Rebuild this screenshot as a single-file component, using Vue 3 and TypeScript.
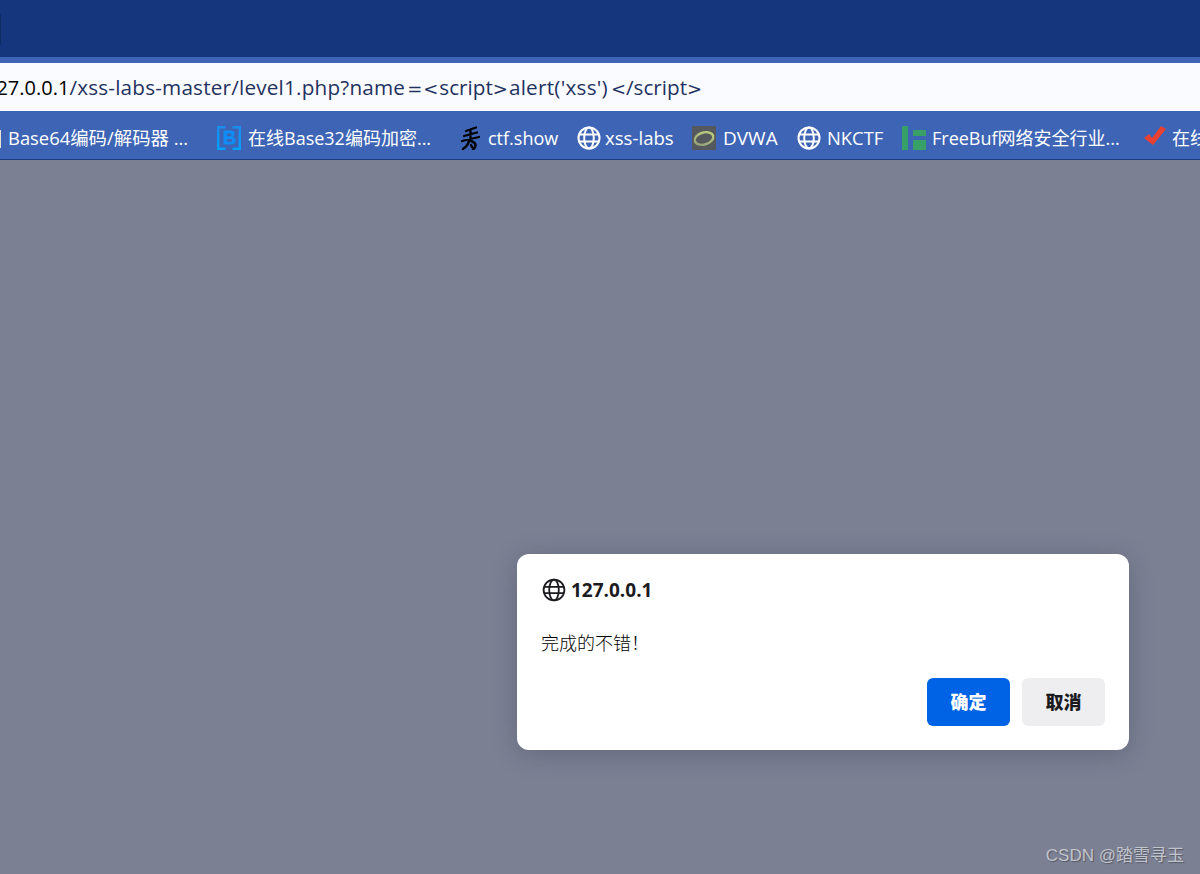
<script setup lang="ts">
interface Mark { label: string; icon: string; width: number; gap: number; size: number }
const marks: Mark[] = [
  { label: 'Base64编码/解码器 ...', icon: 'doc', width: 240, gap: 7, size: 18.4 },
  { label: '在线Base32编码加密...', icon: 'b', width: 242, gap: 7, size: 18 },
  { label: 'ctf.show', icon: 'ctf', width: 118, gap: 5, size: 18 },
  { label: 'xss-labs', icon: 'globe', width: 115, gap: 4, size: 18.6 },
  { label: 'DVWA', icon: 'dvwa', width: 105, gap: 7, size: 19 },
  { label: 'NKCTF', icon: 'globe', width: 105, gap: 6, size: 18.4 },
  { label: 'FreeBuf网络安全行业...', icon: 'fb', width: 242, gap: 6, size: 18 },
  { label: '在线', icon: 'check', width: 80, gap: 4, size: 18 },
]
</script>

<template>
  <div class="screen">
    <header class="titlebar"><span class="tab-edge"></span></header>
    <div class="addressbar">
      <span class="url"><span class="host">127.0.0.1</span><span class="path">/xss-labs-master/level1.php?name</span><span class="sym lead">=&lt;</span>script<span class="sym">&gt;</span><span class="call">alert('xss')</span><span class="sym close">&lt;</span>/script<span class="sym">&gt;</span></span>
    </div>
    <nav class="bookmarks">
      <div v-for="m in marks" :key="m.label" class="mark" :style="{ width: m.width + 'px', gap: m.gap + 'px', fontSize: m.size + 'px' }">
        <svg v-if="m.icon === 'doc'" class="ico" width="24" height="24" viewBox="0 0 24 24">
          <path d="M1 4h23v18H1z" fill="#e8e4d8" />
        </svg>
        <svg v-else-if="m.icon === 'b'" class="ico" width="24" height="24" viewBox="0 0 24 24" fill="none">
          <defs>
            <linearGradient id="bg" x1="0" y1="0" x2="0" y2="1">
              <stop offset="0" stop-color="#1c8cec" />
              <stop offset="1" stop-color="#00a0ff" />
            </linearGradient>
          </defs>
          <path d="M8.500 1.200H1.200v21.600H8.500M15.500 1.200h7.300v21.600H15.500" stroke="url(#bg)" stroke-width="2.400" />
          <path d="M6.500 4.500h7q4 0 4 3.300q0 2.500-2 3.300q3 .7 3 3.900q0 3.500-5 3.500h-7zM10 7.500v2.800h3q1.500 0 1.500-1.400T13 7.500zM10 13v2.800h3.500q1.800 0 1.800-1.400T13.500 13z" fill="#0f8cf5" fill-rule="evenodd" />
        </svg>
        <svg v-else-if="m.icon === 'ctf'" class="ico" width="24" height="24" viewBox="0 0 24 24" fill="none" stroke="#000" stroke-linecap="round">
          <path d="M7 5 17 1.500M5 10 18 6.500M3 15 20 11M11.500 3.500V15" stroke-width="2.300" />
          <path d="M10 15C9 19 7 21 4 23M13 15.500C17 17 18 20 14 23.500M12 19 13 21" stroke-width="2.500" />
        </svg>
        <svg v-else-if="m.icon === 'globe'" class="ico" width="24" height="24" viewBox="0 0 24 24" fill="none" stroke="#fff" stroke-width="2">
          <circle cx="12" cy="12" r="10.500" />
          <ellipse cx="12" cy="12" rx="4.800" ry="10.500" />
          <path d="M1.500 8.500h21M1.500 15.500h21" />
        </svg>
        <svg v-else-if="m.icon === 'dvwa'" class="ico" width="24" height="24" viewBox="0 0 24 24" fill="none">
          <defs>
            <linearGradient id="ring" x1="0" y1="1" x2="1" y2="0">
              <stop offset="0" stop-color="#8f9a78" />
              <stop offset="1" stop-color="#c3d47e" />
            </linearGradient>
          </defs>
          <rect width="24" height="24" fill="#55585c" />
          <ellipse cx="12" cy="12.500" rx="9.500" ry="6" transform="rotate(-16 12 12.500)" stroke="url(#ring)" stroke-width="2.400" />
        </svg>
        <svg v-else-if="m.icon === 'fb'" class="ico" width="24" height="24" viewBox="0 0 24 24">
          <path d="M0 0h6v24H0zM11 4h13v6H11zM11 14h13v10H11z" fill="#36a066" />
        </svg>
        <svg v-else class="ico" width="24" height="24" viewBox="0 0 24 24">
          <path d="M0 12 5 8 8 12 17 0 22 3 9 19z" fill="#e84033" />
        </svg>
        <span class="mark-label">{{ m.label }}</span>
      </div>
    </nav>
    <main class="page">
      <section class="dialog">
        <div class="origin">
          <svg class="origin-ico" width="24" height="24" viewBox="0 0 24 24" fill="none" stroke="#1b1b1f" stroke-width="1.800">
            <circle cx="12" cy="12" r="10.400" />
            <ellipse cx="12" cy="12" rx="4.800" ry="10.400" />
            <path d="M2 8.800h20M2 15.200h20" />
          </svg>
          <span>127.0.0.1</span>
        </div>
        <p class="message">完成的不错！</p>
        <div class="actions">
          <button class="btn primary"><span class="btn-label">确定</span></button>
          <button class="btn"><span class="btn-label">取消</span></button>
        </div>
      </section>
      <span class="watermark">CSDN @踏雪寻玉</span>
    </main>
  </div>
</template>

<style>
html, body { margin: 0; padding: 0; overflow: hidden; }
</style>

<style scoped>
.screen {
  width: 1200px;
  height: 874px;
  display: flex;
  flex-direction: column;
  overflow: hidden;
  font-family: "Open Sans", "Noto Sans CJK SC", sans-serif;
  background: #7b8093;
}
.titlebar {
  height: 57px;
  flex: none;
  background: #15367d;
  display: flex;
  align-items: flex-start;
}
.tab-edge {
  width: 1px;
  height: 31px;
  margin-top: 14px;
  background: #0e2a63;
}
.addressbar {
  height: 54px;
  flex: none;
  box-sizing: border-box;
  border-top: 6px solid #3e65b5;
  background: #fafbff;
  display: flex;
  align-items: center;
  white-space: nowrap;
}
.url {
  margin-left: -15px;
  padding-top: 2px;
  font-size: 20.7px;
  color: #1f3260;
  line-height: 46px;
}
.host { color: #000; font-size: 20px; }
.path { letter-spacing: 0.2px; }
.call { letter-spacing: 0.25px; }
.sym {
  font-family: "DejaVu Sans", sans-serif;
  font-size: 18px;
  letter-spacing: 1px;
}
.sym.lead { margin-left: 2px; }
.sym.close { margin-left: 3px; margin-right: -1px; }
.bookmarks {
  height: 49px;
  flex: none;
  box-sizing: border-box;
  padding-top: 6px;
  background: #3e65b5;
  border-bottom: 1px solid #1c3a7d;
  display: flex;
  align-items: center;
  overflow: hidden;
}
.mark {
  flex: none;
  display: flex;
  align-items: center;
  white-space: nowrap;
  color: #fff;
}
.mark:first-child { margin-left: -23px; }
.ico { flex: none; }
.mark-label { line-height: 24px; }
.page {
  flex: 1;
  position: relative;
  background: #7b8093;
}
.dialog {
  position: absolute;
  left: 517px;
  top: 394px;
  width: 612px;
  height: 196px;
  box-sizing: border-box;
  padding: 24px;
  background: #fff;
  border-radius: 12px;
  box-shadow: 0 4px 24px rgba(40, 44, 60, 0.28);
  display: flex;
  flex-direction: column;
}
.origin {
  display: flex;
  align-items: center;
  gap: 6px;
  height: 24px;
  font-size: 19px;
  font-weight: 700;
  color: #1b1b1f;
}
.origin-ico { overflow: visible; transform: translateX(1px); }
.message {
  margin: 28px 0 0;
  font-size: 18px;
  line-height: 24px;
  color: #000;
  font-family: "Noto Sans CJK SC", sans-serif;
  font-weight: 300;
}
.actions {
  margin-top: auto;
  display: flex;
  justify-content: flex-end;
  gap: 12px;
}
.btn {
  width: 83px;
  height: 48px;
  border: 0;
  border-radius: 6px;
  background: #eeeef1;
  color: #1b1b1f;
  font-family: "Noto Sans CJK SC", sans-serif;
  font-size: 18px;
  font-weight: 900;
  padding: 0 0 2px;
}
.btn.primary {
  background: #0063e5;
  color: #fff;
}
.btn-label { display: block; line-height: 24px; }
.watermark {
  position: absolute;
  right: 16px;
  bottom: 8px;
  font-family: "Liberation Sans", "Noto Sans CJK SC", sans-serif;
  font-size: 17px;
  line-height: 20px;
  color: #c2c4cc;
  text-shadow: 1px 1px 1px rgba(50, 50, 60, 0.5);
}
</style>
